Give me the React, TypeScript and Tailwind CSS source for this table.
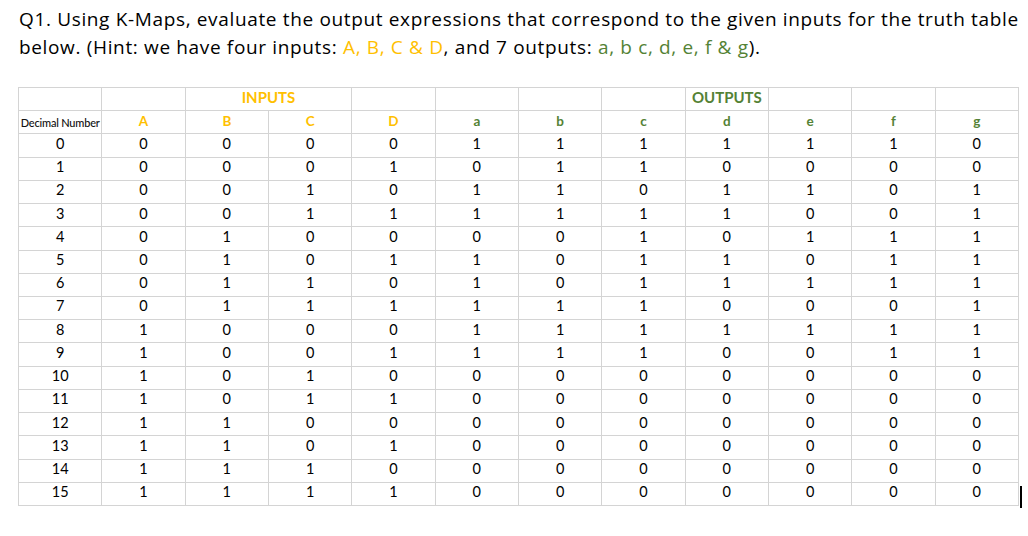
import React from 'react';

const rows: number[][] = [
  [0, 0, 0, 0, 1, 1, 1, 1, 1, 1, 0],
  [0, 0, 0, 1, 0, 1, 1, 0, 0, 0, 0],
  [0, 0, 1, 0, 1, 1, 0, 1, 1, 0, 1],
  [0, 0, 1, 1, 1, 1, 1, 1, 0, 0, 1],
  [0, 1, 0, 0, 0, 0, 1, 0, 1, 1, 1],
  [0, 1, 0, 1, 1, 0, 1, 1, 0, 1, 1],
  [0, 1, 1, 0, 1, 0, 1, 1, 1, 1, 1],
  [0, 1, 1, 1, 1, 1, 1, 0, 0, 0, 1],
  [1, 0, 0, 0, 1, 1, 1, 1, 1, 1, 1],
  [1, 0, 0, 1, 1, 1, 1, 0, 0, 1, 1],
  [1, 0, 1, 0, 0, 0, 0, 0, 0, 0, 0],
  [1, 0, 1, 1, 0, 0, 0, 0, 0, 0, 0],
  [1, 1, 0, 0, 0, 0, 0, 0, 0, 0, 0],
  [1, 1, 0, 1, 0, 0, 0, 0, 0, 0, 0],
  [1, 1, 1, 0, 0, 0, 0, 0, 0, 0, 0],
  [1, 1, 1, 1, 0, 0, 0, 0, 0, 0, 0],
];

const inputs = ['A', 'B', 'C', 'D'];
const outputs = ['a', 'b', 'c', 'd', 'e', 'f', 'g'];

const cell = 'h-[23.22px] border-r border-b border-[#d4d4d4] flex items-end justify-center pb-[2px]';

export default function App() {
  return (
    <div className="bg-white w-[1028px] h-[536px] overflow-hidden font-['Lato',sans-serif] text-black">
      {/* question text */}
      <div className="pl-[19px] pt-[5px] font-['Open_Sans',sans-serif] text-[19px] leading-[28px] tracking-[0.65px] whitespace-nowrap">
        <p>
          Q1. Using K-Maps, evaluate the output expressions that correspond to the given inputs for the truth table
        </p>
        <p>
          below. (Hint: we have four inputs: <span className="text-[#ffc000]">A, B, C &amp; D</span>, and 7 outputs:{' '}
          <span className="text-[#548235]">a, b c, d, e, f &amp; g</span>).
        </p>
      </div>

      <div className="flex items-end mt-[26px] ml-[18px]">
        <div className="grid grid-cols-12 w-[1001px] border-l border-t border-[#d4d4d4]">
          {/* header row 1 */}
          <div className={cell} />
          <div className={cell} />
          <div className={`${cell} col-span-2 text-[15px] font-bold text-[#ffc000]`}>INPUTS</div>
          <div className={cell} />
          <div className={cell} />
          <div className={cell} />
          <div className={cell} />
          <div className={`${cell} text-[15px] font-bold text-[#548235]`}>OUTPUTS</div>
          <div className={cell} />
          <div className={cell} />
          <div className={cell} />

          {/* header row 2 */}
          <div className={`${cell} text-[11px] font-medium text-[#111] tracking-[-0.2px]`}>Decimal Number</div>
          {inputs.map((h) => (
            <div key={h} className={`${cell} text-[13.5px] font-bold text-[#ffc000]`}>
              {h}
            </div>
          ))}
          {outputs.map((h) => (
            <div key={h} className={`${cell} text-[13.5px] font-bold text-[#548235]`}>
              {h}
            </div>
          ))}

          {/* data */}
          {rows.map((r, i) => (
            <React.Fragment key={i}>
              <div className={`${cell} text-[14.5px]`}>{i}</div>
              {r.map((v, j) => (
                <div key={j} className={`${cell} text-[14.5px]`}>
                  {v}
                </div>
              ))}
            </React.Fragment>
          ))}
        </div>
        <div className="w-[2px] h-[22px] bg-black ml-[1px] translate-y-[2px]" />
      </div>
    </div>
  );
}
